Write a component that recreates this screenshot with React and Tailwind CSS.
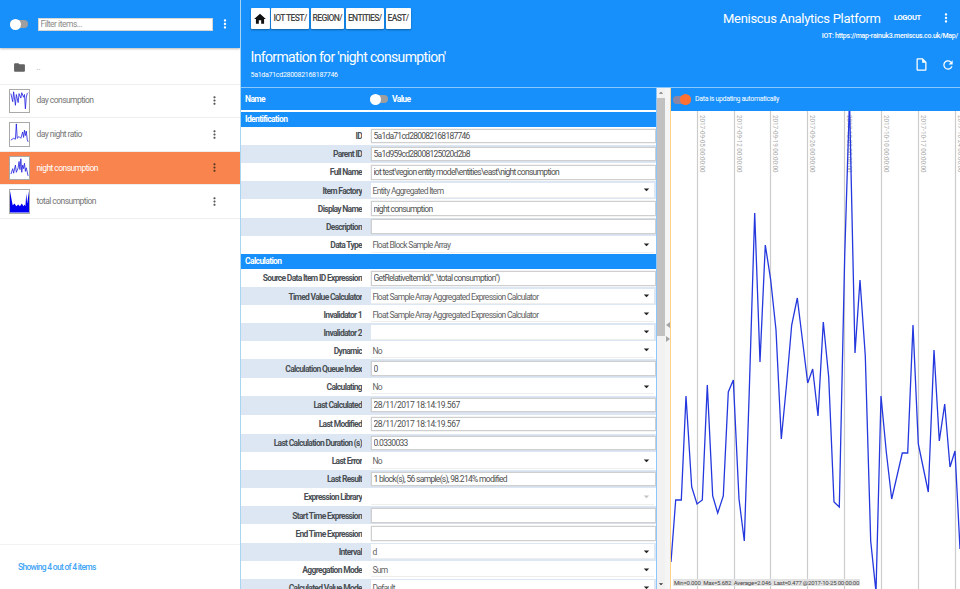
import { MdHome, MdFolder, MdMoreVert, MdArrowDropDown, MdOutlineInsertDriveFile, MdRefresh, MdArrowDropUp } from "react-icons/md";

const items = [
  { name: "day consumption", points: "1,4 3,13 4,2 6,17 7,5 9,14 10,4 12,9 13,3 15,8 16,5 17,21 18,8 19,4 20,3", fill: false },
  { name: "day night ratio", points: "1,19 4,17 6,18 7,1 8,17 10,15 12,17 14,10 15,16 16,8 17,14 18,9 19,18 20,21", fill: false },
  { name: "night consumption", points: "1,19 3,13 4,18 6,9 7,17 9,12 10,5 11,14 12,2 13,17 14,9 15,13 16,7 17,16 18,12 20,21", fill: false, active: true },
  { name: "total consumption", points: "0,1 2,12 3,17 5,15 7,18 9,16 11,18 13,15 15,18 16,16 17,18 18,4 19,15 21,1 21,25 0,25", fill: true },
];

const sections = [
  {
    title: "Identification",
    rows: [
      { label: "ID", value: "5a1da71cd280082168187746", spacing: "tracking-[-0.75px]" },
      { label: "Parent ID", value: "5a1d959cd28008125020d2b8", spacing: "tracking-[-0.75px]" },
      { label: "Full Name", value: "iot test\\region entity model\\entities\\east\\night consumption" },
      { label: "Item Factory", value: "Entity Aggregated Item", select: true },
      { label: "Display Name", value: "night consumption" },
      { label: "Description", value: "" },
      { label: "Data Type", value: "Float Block Sample Array", select: true },
    ],
  },
  {
    title: "Calculation",
    rows: [
      { label: "Source Data Item ID Expression", value: 'GetRelativeItemId("..\\total consumption")' },
      { label: "Timed Value Calculator", value: "Float Sample Array Aggregated Expression Calculator", select: true },
      { label: "Invalidator 1", value: "Float Sample Array Aggregated Expression Calculator", select: true },
      { label: "Invalidator 2", value: "", select: true },
      { label: "Dynamic", value: "No", select: true },
      { label: "Calculation Queue Index", value: "0" },
      { label: "Calculating", value: "No", select: true },
      { label: "Last Calculated", value: "28/11/2017 18:14:19.567", tall: "h-[19px]", spacing: "tracking-[-0.45px]" },
      { label: "Last Modified", value: "28/11/2017 18:14:19.567", tall: "h-[19px]", spacing: "tracking-[-0.45px]" },
      { label: "Last Calculation Duration (s)", value: "0.0330033", tall: "h-[18.5px]" },
      { label: "Last Error", value: "No", select: true },
      { label: "Last Result", value: "1 block(s), 56 sample(s), 98.214% modified" },
      { label: "Expression Library", value: "", select: true, disabled: true },
      { label: "Start Time Expression", value: "" },
      { label: "End Time Expression", value: "" },
      { label: "Interval", value: "d", select: true },
      { label: "Aggregation Mode", value: "Sum", select: true },
      { label: "Calculated Value Mode", value: "Default", select: true },
    ],
  },
];

const gridLines = [
  [697.5, "2017-09-05 00:00:00"],
  [734.5, "2017-09-12 00:00:00"],
  [770.5, "2017-09-19 00:00:00"],
  [807.5, "2017-09-26 00:00:00"],
  [844.5, "2017-10-03 00:00:00"],
  [881.5, "2017-10-10 00:00:00"],
  [918.5, "2017-10-17 00:00:00"],
  [955.5, "2017-10-24 00:00:00"],
];

const chartPoints =
  "671,562 675.7,500 681.3,500 686,396 691.7,487 697,504 702.3,500 707.3,385 712.7,496 717.7,513 723.3,496 728.3,392 733.3,380 739,499 744.3,541 749.3,390 754.7,213 760,362 765.3,245 770.7,280 776,330 781.3,439 786.5,385 791.7,325 797.3,298 807.7,383 812.7,369 818,416 823.3,322 828.7,377 834,502 839.3,507 844.7,256 849.5,100 855,353 860,280 865.3,356 870.7,541 876,592 881,396 886.3,452 891.7,499 902.3,453 907.7,453 913,325 918.3,444 928.3,492 934,350 939.3,441 944.7,404 950,467 955,451 960,549";

function Toggle({ on }) {
  return (
    <div className={`flex h-[8px] w-[18px] items-center rounded-full ${on ? "justify-end bg-[#8d86a3]" : "justify-start bg-[#9e9e9e]"}`}>
      <div className={`size-[11px] shrink-0 rounded-full ${on ? "bg-[#ff7033]" : "bg-white"}`}></div>
    </div>
  );
}

function Thumb({ item }) {
  return (
    <svg viewBox="0 0 21 25" preserveAspectRatio="none" className="h-[24.5px] w-[21px] shrink-0 border border-[#a9a9a9] bg-white">
      {item.fill ? (
        <polygon points={item.points} fill="#0000f0" />
      ) : (
        <polyline points={item.points} fill="none" stroke="#2020e0" strokeWidth="0.9" />
      )}
    </svg>
  );
}

function FormRow({ row, index }) {
  const height = row.tall || (row.select ? "h-[18px]" : "h-[18.2px]");
  return (
    <div className={`flex items-center ${height} ${index % 2 === 1 ? "bg-[#dce7f3]" : "bg-white"}`}>
      <div className="w-[121px] shrink-0 truncate pt-[1px] text-right text-[8.5px] font-bold tracking-[-0.7px] text-[#4a4f55]">{row.label}</div>
      <div className="ml-[9px] w-[285px]">
        {row.select ? (
          <div className="flex h-[15.5px] w-[283px] items-center justify-between border-b border-[#eeeeee] bg-white pl-[1.5px] text-[8.5px] tracking-[-0.7px] text-[#626262]">
            <span className="pt-[2px]">{row.value}</span>
            <MdArrowDropDown className={`mr-[1px] text-[13px] ${row.disabled ? "text-[#c4c4c4]" : "text-[#222222]"}`} />
          </div>
        ) : (
          <input
            readOnly
            value={row.value}
            className={`block h-[14.5px] w-full border border-[#cfcfcf] bg-white px-[1.5px] font-['Roboto',sans-serif] text-[8.5px] text-[#4f4f4f] shadow-[0_0_1px_#bbbbbb] outline-none ${row.spacing || "tracking-[-0.7px]"}`}
          />
        )}
      </div>
    </div>
  );
}

export default function App() {
  return (
    <div className="flex h-[589px] w-[960px] overflow-hidden bg-white font-['Roboto',sans-serif]">
      {/* Item list */}
      <div className="flex h-full w-[240px] shrink-0 flex-col">
        <div className="flex h-[48px] shrink-0 items-center bg-[#1890fb] pl-[10px] shadow-[0_1px_2px_#bbbbbb]">
          <Toggle />
          <input
            readOnly
            placeholder="Filter items..."
            className="ml-[10px] h-[13px] w-[175px] border border-[#d6d6d6] bg-white px-[1.5px] font-['Roboto',sans-serif] text-[8.5px] tracking-[-0.5px] text-[#777777] outline-none placeholder:text-[#8a8a8a]"
          />
          <MdMoreVert className="ml-[5px] text-[14px] text-white" />
        </div>
        <div className="flex h-[36.5px] shrink-0 items-center border-b border-[#eeeeee] pl-[13px] pt-[4px]">
          <MdFolder className="text-[13px] text-[#636363]" />
          <span className="ml-[10.5px] text-[8px] text-[#9a9a9a]">..</span>
        </div>
        {items.map((item) => (
          <div
            key={item.name}
            className={`flex h-[33.6px] shrink-0 items-center border-b border-[#eeeeee] pl-[8.5px] ${item.active ? "bg-[#f9844e]" : "bg-white"}`}
          >
            <Thumb item={item} />
            <span className={`ml-[7px] w-[171px] text-[8.5px] tracking-[-0.55px] ${item.active ? "text-white" : "text-[#757575]"}`}>{item.name}</span>
            <MdMoreVert className={`text-[13px] ${item.active ? "text-[#5a3a2a]" : "text-[#555555]"}`} />
          </div>
        ))}
        <div className="flex-1"></div>
        <div className="flex h-[45px] shrink-0 items-center border-t border-[#f2f2f2] pl-[18px] text-[8.5px] font-medium tracking-[-0.7px] text-[#42a5f5]">
          Showing 4 out of 4 items
        </div>
      </div>

      {/* Details */}
      <div className="flex h-full w-[720px] flex-col border-l border-[#a8d5f0]">
        <div className="flex h-[87px] shrink-0 bg-[#1890fb] text-white">
          <div className="flex-1 pl-[9.5px] pt-[8px]">
            <div className="flex gap-[1.5px]">
              <div className="flex h-[21px] w-[19px] items-center justify-center rounded-[1px] bg-white shadow-[0_1px_2px_#1060a0]">
                <MdHome className="text-[14px] text-[#111111]" />
              </div>
              {[
                ["IOT TEST/", "w-[38px]"],
                ["REGION/", "w-[33.5px]"],
                ["ENTITIES/", "w-[38.5px]"],
                ["EAST/", "w-[25px]"],
              ].map(([label, width]) => (
                <div key={label} className={`flex h-[21px] ${width} items-center justify-center rounded-[1px] bg-white text-[8.5px] font-medium tracking-[-0.6px] text-[#444444] shadow-[0_1px_2px_#1060a0]`}>
                  {label}
                </div>
              ))}
            </div>
            <div className="mt-[19px] text-[14px] leading-[18px] tracking-[-0.65px] whitespace-nowrap">Information for 'night consumption'</div>
            <div className="mt-[4.5px] text-[7px] leading-[9px] tracking-[-0.28px]">5a1da71cd280082168187746</div>
          </div>
          <div className="w-[238px] shrink-0 pt-[5px]">
            <div className="flex h-[26px] items-center">
              <span className="ml-[1px] w-[171px] text-[13px] leading-none tracking-[-0.3px] whitespace-nowrap">Meniscus Analytics Platform</span>
              <span className="w-[27px] text-[7.5px] font-bold tracking-[-0.35px]">LOGOUT</span>
              <MdMoreVert className="ml-[18px] text-[14px]" />
            </div>
            <div className="pr-[2px] text-right text-[7px] font-medium leading-[10px] tracking-[-0.25px] whitespace-nowrap">IOT: https://map-rainuk3.meniscus.co.uk/Map/</div>
            <div className="mt-[16px] flex items-center justify-end gap-[12px] pr-[5px]">
              <MdOutlineInsertDriveFile className="text-[15px]" />
              <MdRefresh className="text-[14px]" />
            </div>
          </div>
        </div>

        <div className="flex min-h-0 flex-1 border-t border-[#8cc6fb] bg-white">
          {/* Form */}
          <div className="h-full w-[416px] shrink-0 overflow-hidden border-r border-[#8cc6fb]">
            <div className="mb-[1.5px] flex h-[22px] items-center bg-[#1890fb] text-[8.5px] font-bold tracking-[-0.6px] text-white">
              <span className="w-[129px] pl-[4px]">Name</span>
              <Toggle />
              <span className="ml-[4px]">Value</span>
            </div>
            {sections.map((section) => (
              <div key={section.title}>
                <div className="flex h-[15.4px] items-center bg-[#1890fb] pl-[4px] text-[8.5px] font-bold tracking-[-0.6px] text-white">
                  {section.title}
                </div>
                {section.rows.map((row, i) => (
                  <FormRow key={row.label} row={row} index={i} />
                ))}
              </div>
            ))}
          </div>

          {/* Scrollbar */}
          <div className="flex h-full w-[8px] shrink-0 flex-col items-center bg-[#f1f1f1]">
            <MdArrowDropUp className="h-[10px] text-[10px] text-[#777777]" />
            <div className="h-[238px] w-full bg-[#c1c1c1]"></div>
            <div className="flex-1"></div>
            <MdArrowDropDown className="h-[10px] text-[10px] text-[#333333]" />
          </div>

          {/* Splitter */}
          <div className="flex h-full w-[6px] shrink-0 flex-col items-center justify-center gap-[8px] border-r border-[#fbd38d] bg-[#f5f5f5] pb-[14px]">
            <div className="h-0 w-0 border-y-[3px] border-r-[4px] border-y-transparent border-r-[#a5a5a5]"></div>
            <div className="h-0 w-0 border-y-[3px] border-l-[4px] border-y-transparent border-l-[#a5a5a5]"></div>
          </div>

          {/* Chart */}
          <div className="flex h-full min-w-0 flex-1 flex-col">
            <div className="flex h-[23px] shrink-0 items-center bg-[#1890fb] pl-[2px] text-[7px] tracking-[-0.35px] text-white">
              <Toggle on />
              <span className="ml-[4px]">Data is updating automatically</span>
            </div>
            <div className="relative min-h-0 flex-1 overflow-hidden">
              <svg viewBox="671 111 289 478" className="block h-[478px] w-[289px]">
                {gridLines.map(([x, label]) => (
                  <g key={label}>
                    <line x1={x} x2={x} y1="111" y2="589" stroke="#cccccc" strokeWidth="1.2" />
                    <text
                      x={x + 2}
                      y="115"
                      transform={`rotate(90 ${x + 2} 115)`}
                      fontSize="6.3"
                      fill="#ababab"
                      fontFamily="Roboto, sans-serif"
                    >
                      {label}
                    </text>
                  </g>
                ))}
                <polyline points={chartPoints} fill="none" stroke="#2438de" strokeWidth="1.3" />
              </svg>
              <div className="absolute bottom-[3px] left-[2px] bg-[#e2e2e2] px-[1px] text-[6px] leading-[7px] tracking-[-0.2px] whitespace-pre text-[#444444]">
                {"Min=0.000  Max=5.682  Average=2.046  Last=0.477 @2017-10-25 00:00:00"}
              </div>
            </div>
          </div>
        </div>
      </div>
    </div>
  );
}
